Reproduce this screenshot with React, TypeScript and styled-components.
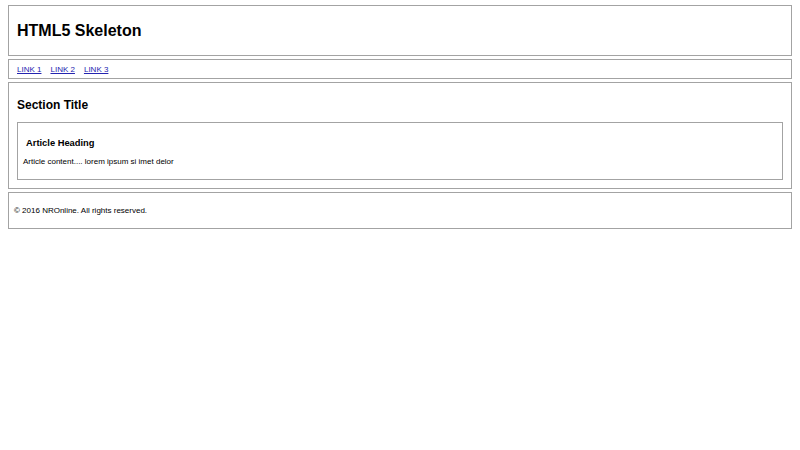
import styled, { createGlobalStyle } from 'styled-components';

const GlobalStyle = createGlobalStyle`
  html, body {
    margin: 0;
    padding: 0;
    background: #fff;
  }
  body {
    font-family: 'Liberation Sans', Arial, sans-serif;
    color: #000;
  }
`;

const LINKS = ['LINK 1', 'LINK 2', 'LINK 3'];

export default function App() {
  return (
    <>
      <GlobalStyle />
      <Page>
        <Header>
          <SiteTitle>HTML5 Skeleton</SiteTitle>
        </Header>
        <Nav>
          {LINKS.map((link) => (
            <NavLink key={link} href="#">
              {link}
            </NavLink>
          ))}
        </Nav>
        <Section>
          <SectionTitle>Section Title</SectionTitle>
          <Article>
            <ArticleHeading>Article Heading</ArticleHeading>
            <ArticleText>Article content.... lorem ipsum si imet delor</ArticleText>
          </Article>
        </Section>
        <Footer>
          <FooterText>© 2016 NROnline. All rights reserved.</FooterText>
        </Footer>
      </Page>
    </>
  );
}

const Page = styled.div`
  padding: 5px 8px;
  display: flex;
  flex-direction: column;
  gap: 3px;
`;

const Box = styled.div`
  border: 1px solid #a3a3a3;
  box-sizing: border-box;
`;

const Header = styled(Box).attrs({ as: 'header' })`
  height: 51px;
  display: flex;
  align-items: center;
  padding-left: 8px;
`;

const SiteTitle = styled.h1`
  margin: 0;
  font-size: 16px;
  font-weight: 700;
  line-height: 18px;
`;

const Nav = styled(Box).attrs({ as: 'nav' })`
  height: 20px;
  display: flex;
  align-items: center;
  gap: 9px;
  padding-left: 8px;
`;

const NavLink = styled.a`
  font-size: 8px;
  line-height: 9px;
  color: #2424b0;
  text-decoration: underline;
`;

const Section = styled(Box).attrs({ as: 'section' })`
  padding: 15px 8px 8px;
`;

const SectionTitle = styled.h2`
  margin: 0 0 10px;
  font-size: 12px;
  font-weight: 700;
  line-height: 14px;
`;

const Article = styled(Box).attrs({ as: 'article' })`
  height: 58px;
  padding: 15px 5px 0;
`;

const ArticleHeading = styled.h3`
  margin: 0 0 8px 3px;
  font-size: 9.36px;
  font-weight: 700;
  line-height: 11px;
`;

const ArticleText = styled.p`
  margin: 0;
  font-size: 8px;
  line-height: 9px;
`;

const Footer = styled(Box).attrs({ as: 'footer' })`
  height: 37px;
  display: flex;
  align-items: center;
  padding-left: 5px;
`;

const FooterText = styled.p`
  margin: 0;
  font-size: 8px;
  line-height: 9px;
`;
